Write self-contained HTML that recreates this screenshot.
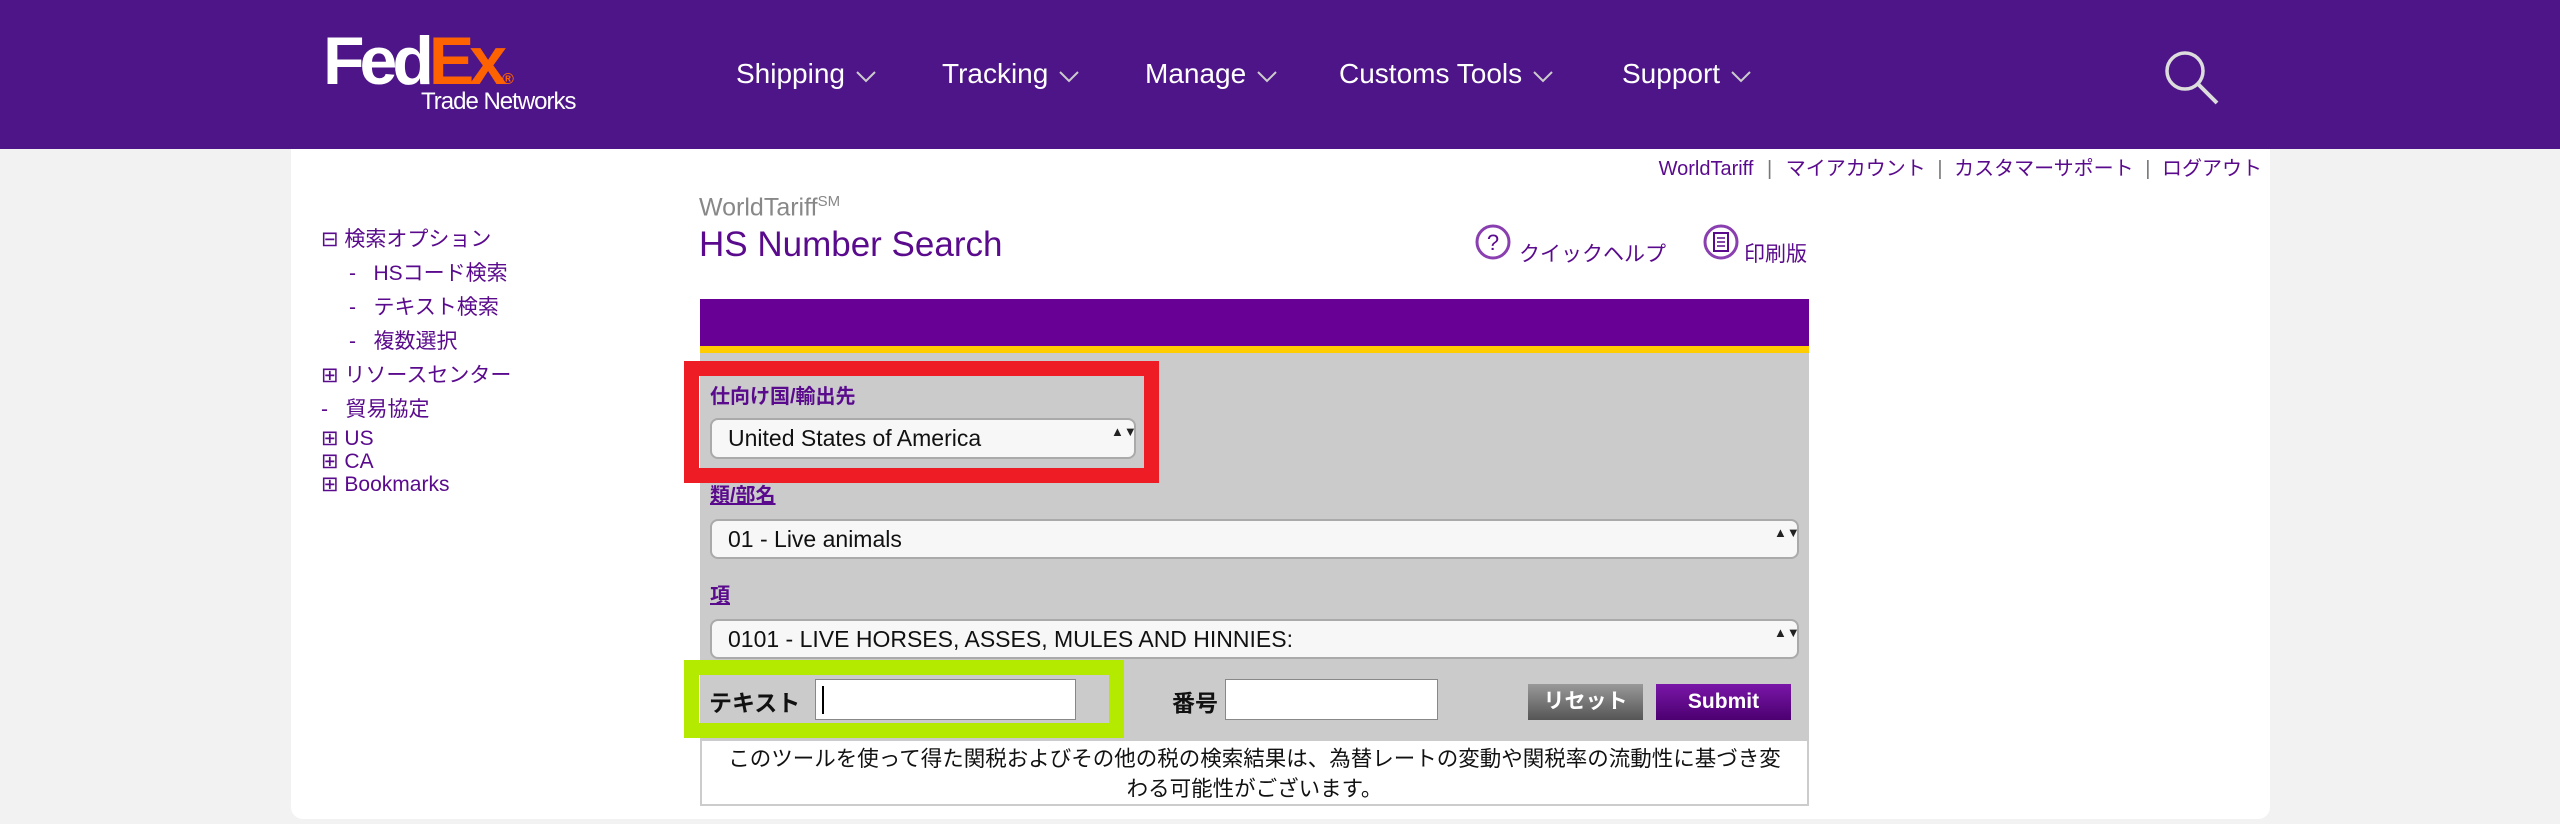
<!DOCTYPE html>
<html><head><meta charset="utf-8"><style>
*{margin:0;padding:0;box-sizing:border-box}
body{width:2560px;height:824px;background:#f2f2f2;font-family:"Liberation Sans","Noto Sans CJK JP",sans-serif;position:relative;overflow:hidden}
.a{position:absolute;white-space:nowrap}
#hdr{position:absolute;left:0;top:0;width:2560px;height:149px;background:#4d1587}
.nav{color:#fff;font-size:28px;top:58px}
.nav svg{margin-left:10px;vertical-align:middle}
#panel{position:absolute;left:291px;top:149px;width:1979px;height:670px;background:#fff;border-radius:0 0 12px 12px}
.p{color:#5a0a8c}
.side{font-size:21px;color:#5a0a8c}
.box{position:absolute;border:1px solid #888;background:#fff}
.sel{position:absolute;background:#f7f7f7;border:2px solid #aaa;border-radius:8px;font-size:23px;color:#111;padding-left:16px;line-height:36px}
.sel:after{content:"▲▼";position:absolute;right:10px;top:5px;font-size:13px;width:13px;line-height:14px;white-space:normal;text-align:center;color:#222}
.lbl{font-size:20px;font-weight:bold;color:#5a0a8c}
</style></head><body>
<div id="hdr"></div>
<div class="a" style="left:323px;top:26px;font-size:68px;font-weight:bold;letter-spacing:-5px;color:#fff;line-height:70px">Fed<span style="color:#ff6200">Ex</span><span style="font-size:16px;color:#ff6200;letter-spacing:0">®</span></div>
<div class="a" style="left:421px;top:88px;font-size:24px;color:#fff;letter-spacing:-1px">Trade Networks</div>
<div class="a nav" style="left:736px">Shipping<svg width="22" height="14"><path d="M2 3l9 9 9-9" stroke="#ccc" stroke-width="2" fill="none"/></svg></div>
<div class="a nav" style="left:942px">Tracking<svg width="22" height="14"><path d="M2 3l9 9 9-9" stroke="#ccc" stroke-width="2" fill="none"/></svg></div>
<div class="a nav" style="left:1145px">Manage<svg width="22" height="14"><path d="M2 3l9 9 9-9" stroke="#ccc" stroke-width="2" fill="none"/></svg></div>
<div class="a nav" style="left:1339px">Customs Tools<svg width="22" height="14"><path d="M2 3l9 9 9-9" stroke="#ccc" stroke-width="2" fill="none"/></svg></div>
<div class="a nav" style="left:1622px">Support<svg width="22" height="14"><path d="M2 3l9 9 9-9" stroke="#ccc" stroke-width="2" fill="none"/></svg></div>
<svg class="a" style="left:2163px;top:49px" width="58" height="58"><circle cx="22" cy="22" r="18" stroke="#ddd" stroke-width="3.5" fill="none"/><path d="M35 35l19 19" stroke="#ddd" stroke-width="4"/></svg>
<div id="panel"></div>
<div class="a p" style="right:298px;top:152px;font-size:20px">WorldTariff <span style="color:#777;margin:0 8px">|</span> マイアカウント <span style="color:#777;margin:0 6px">|</span> カスタマーサポート <span style="color:#777;margin:0 6px">|</span> ログアウト</div>
<div class="a side" style="left:321px;top:223px;line-height:34px">
<div>⊟ 検索オプション</div>
<div style="padding-left:28px">-&nbsp;&nbsp; HSコード検索</div>
<div style="padding-left:28px">-&nbsp;&nbsp; テキスト検索</div>
<div style="padding-left:28px">-&nbsp;&nbsp; 複数選択</div>
<div>⊞ リソースセンター</div>
<div>-&nbsp;&nbsp; 貿易協定</div>
<div style="line-height:23px">⊞ US<br>⊞ CA<br>⊞ Bookmarks</div>
</div>
<div class="a" style="left:699px;top:193px;font-size:25px;color:#888">WorldTariff<sup style="font-size:15px">SM</sup></div>
<div class="a p" style="left:699px;top:225px;font-size:35px">HS Number Search</div>
<svg class="a" style="left:1474px;top:223px" width="38" height="38"><circle cx="19" cy="19" r="16" stroke="#8a3fb0" stroke-width="3" fill="#fff"/><text x="19" y="27" font-size="22" text-anchor="middle" fill="#5a0a8c" font-family="Liberation Sans">?</text></svg>
<div class="a p" style="left:1519px;top:238px;font-size:21px">クイックヘルプ</div>
<svg class="a" style="left:1702px;top:223px" width="38" height="38"><circle cx="19" cy="19" r="16" stroke="#8a3fb0" stroke-width="3" fill="#fff"/><rect x="12" y="10" width="14" height="18" stroke="#5a0a8c" stroke-width="2" fill="none"/><path d="M15 15h8M15 19h8M15 23h8" stroke="#5a0a8c" stroke-width="1.5"/></svg>
<div class="a p" style="left:1744px;top:238px;font-size:21px">印刷版</div>
<div class="a" style="left:700px;top:299px;width:1109px;height:47px;background:#680096"></div>
<div class="a" style="left:700px;top:346px;width:1109px;height:7px;background:#ffcc00"></div>
<div class="a" style="left:700px;top:353px;width:1109px;height:388px;background:#cbcbcb"></div>
<div class="a" style="left:700px;top:741px;width:1109px;height:65px;background:#fff;border:2px solid #ccc;border-top:none"></div>
<div class="a" style="left:684px;top:361px;width:475px;height:122px;border:15px solid #ee1d25"></div>
<div class="a" style="left:684px;top:660px;width:440px;height:78px;border:15px solid #b3ea00"></div>
<div class="a lbl" style="left:710px;top:380px">仕向け国/輸出先</div>
<div class="sel" style="left:710px;top:418px;width:426px;height:41px">United States of America</div>
<div class="a lbl" style="left:710px;top:479px;text-decoration:underline">類/部名</div>
<div class="sel" style="left:710px;top:519px;width:1089px;height:40px">01 - Live animals</div>
<div class="a lbl" style="left:710px;top:579px;text-decoration:underline">項</div>
<div class="sel" style="left:710px;top:619px;width:1089px;height:40px">0101 - LIVE HORSES, ASSES, MULES AND HINNIES:</div>
<div class="a" style="left:709px;top:684px;font-size:23px;font-weight:bold;color:#111">テキスト</div>
<div class="box" style="left:815px;top:679px;width:261px;height:41px"><div style="position:absolute;left:6px;top:6px;width:2px;height:28px;background:#000"></div></div>
<div class="a" style="left:1172px;top:684px;font-size:23px;font-weight:bold;color:#111">番号</div>
<div class="box" style="left:1225px;top:679px;width:213px;height:41px"></div>
<div class="a" style="left:1528px;top:684px;width:115px;height:36px;background:linear-gradient(#999,#555);color:#fff;font-weight:bold;font-size:21px;text-align:center;line-height:36px">リセット</div>
<div class="a" style="left:1656px;top:684px;width:135px;height:36px;background:linear-gradient(#7a16a8,#4b0070);color:#fff;font-weight:bold;font-size:21px;text-align:center;line-height:36px">Submit</div>
<div class="a" style="left:702px;top:744px;width:1105px;padding:0 24px;text-align:center;font-size:21.5px;line-height:30px;color:#111;white-space:normal">このツールを使って得た関税およびその他の税の検索結果は、為替レートの変動や関税率の流動性に基づき変わる可能性がございます。</div>
</body></html>
